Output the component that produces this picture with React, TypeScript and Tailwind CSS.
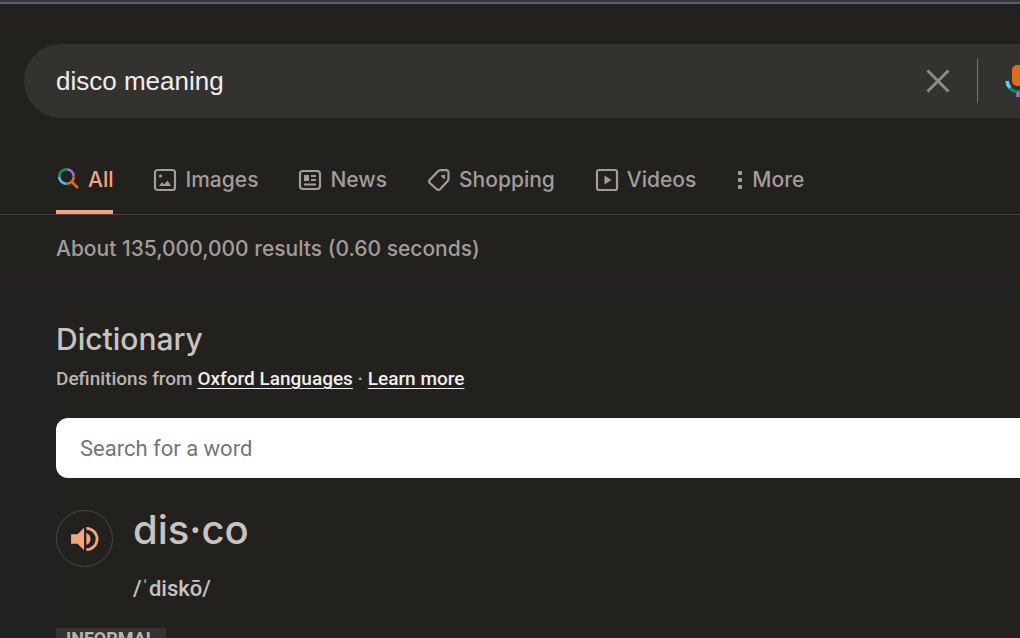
import type { ReactNode } from "react";

function Icon({ children }: { children: ReactNode }) {
  return (
    <svg viewBox="0 0 24 24" className="size-6 shrink-0" fill="none" stroke="currentColor" strokeWidth="2.2" aria-hidden="true">
      {children}
    </svg>
  );
}

function SearchIcon() {
  return (
    <svg viewBox="0 0 24 24" className="size-6 shrink-0" fill="none" strokeWidth="2.6" aria-hidden="true">
      <path d="M10.5 3.2A7.3 7.3 0 0 1 17.8 10.5" stroke="#a06be0" />
      <path d="M3.2 10.5A7.3 7.3 0 0 1 10.5 3.2" stroke="#12965f" />
      <path d="M10.5 17.8A7.3 7.3 0 0 1 3.2 10.5" stroke="#4cc3f5" />
      <path d="M17.8 10.5A7.3 7.3 0 0 1 10.5 17.8" stroke="#e06a1c" />
      <path d="M15.600 15.600L22 22" stroke="#e06a1c" />
    </svg>
  );
}

function MicIcon() {
  return (
    <svg viewBox="0 0 32 36" className="h-9 w-8" fill="none" aria-hidden="true">
      <rect x="10" y="2" width="12" height="21" rx="5" fill="#e06a15" />
      <path d="M5 18C5.3 21 6.4 23.2 8.2 25" stroke="#5fd0fa" strokeWidth="3.5" />
      <path d="M8 25C12 30 20 30 24 25" stroke="#12885c" strokeWidth="3.5" />
      <path d="M24 25C25.6 23.2 26.7 21 27 18" stroke="#5fd0fa" strokeWidth="3.5" />
      <path d="M16 29V34" stroke="#b264d8" strokeWidth="3.5" />
    </svg>
  );
}

const tabs = [
  {
    label: "Images",
    icon: (
      <Icon>
        <rect x="2" y="2" width="20" height="20" rx="2.5" />
        <path d="M6 18L9 14L11 16.5L14.5 12.5L18 18Z" fill="currentColor" stroke="none" />
        <circle cx="7.5" cy="8" r="1.6" fill="currentColor" stroke="none" />
      </Icon>
    ),
  },
  {
    label: "News",
    icon: (
      <Icon>
        <rect x="2" y="3" width="20" height="18" rx="3" />
        <rect x="6" y="7" width="5" height="6" fill="currentColor" stroke="none" />
        <path d="M13 8H18M13 12H18M6 16.5H18" />
      </Icon>
    ),
  },
  {
    label: "Shopping",
    icon: (
      <Icon>
        <path d="M13.5 2.2H19.5A2 2 0 0 1 21.5 4.2V10.5Q21.5 12 20.5 13.2L13 21.3Q11.5 22.8 10 21.3L2.7 15Q1.3 13.6 2.7 12.1L10.8 3.4Q11.9 2.2 13.5 2.2Z" strokeLinejoin="round" />
        <path d="M14 7H18V11Q14.5 10.5 14 7Z" fill="currentColor" stroke="none" />
      </Icon>
    ),
  },
  {
    label: "Videos",
    icon: (
      <Icon>
        <rect x="2" y="2" width="20" height="20" rx="2" />
        <path d="M9.5 7.5L16.5 12L9.5 16.5Z" fill="currentColor" stroke="none" />
      </Icon>
    ),
  },
];

export default function App() {
  return (
    <div className="flex h-screen flex-col overflow-hidden bg-[#22211d] font-['Roboto',sans-serif] text-[#c8c2c2]">
      <div className="h-1 shrink-0 border-b-2 border-[#5d5b63] bg-[#37363c]" />
      <div className="h-2 shrink-0 bg-[#1f2023]" />

      <header className="shrink-0 border-b border-[#44423f]">
        <form role="search" className="mt-8 -mr-10 ml-6 flex h-[74px] items-center rounded-l-full bg-[#33322f] pl-8" onSubmit={(e) => e.preventDefault()}>
          <input
            type="text"
            aria-label="Search"
            defaultValue="disco meaning"
            className="min-w-0 flex-1 bg-transparent font-['Liberation_Sans',sans-serif] text-[26px] text-[#f1eded] outline-none"
          />
          <button type="button" aria-label="Clear" className="mr-5 p-1 text-[#8f8987]">
            <svg viewBox="0 0 30 30" className="size-[30px]" fill="none" stroke="currentColor" strokeWidth="3" aria-hidden="true">
              <path d="M4.5 4.5L25.5 25.5M25.5 4.5L4.5 25.5" />
            </svg>
          </button>
          <div className="h-11 w-px bg-[#77726f]" />
          <button type="button" aria-label="Search by voice" className="mr-[26px] ml-6">
            <MicIcon />
          </button>
        </form>

        <nav className="mt-10 ml-14 flex h-14 gap-10 font-['Inter',sans-serif] text-[21px] font-medium text-[#a39c9a]">
          <a href="#all" aria-current="page" className="flex gap-2 border-b-4 border-[#f4a482] pt-2 leading-7 text-[#f4a482]">
            <SearchIcon />
            All
          </a>
          {tabs.map((tab) => (
            <a key={tab.label} href={"#" + tab.label.toLowerCase()} className="flex gap-2 pt-2 leading-7">
              <span className="pt-0.5">{tab.icon}</span>
              {tab.label}
            </a>
          ))}
          <button type="button" className="flex gap-2 pt-2 leading-7">
            <svg viewBox="0 0 8 24" className="mt-0.5 h-6 w-2" fill="currentColor" aria-hidden="true">
              <rect x="2" y="3" width="4" height="4" rx="1" />
              <rect x="2" y="10" width="4" height="4" rx="1" />
              <rect x="2" y="17" width="4" height="4" rx="1" />
            </svg>
            More
          </button>
        </nav>
      </header>

      <p className="shrink-0 py-5 pl-14 font-['Inter',sans-serif] text-[21px] leading-7 font-medium text-[#a39c9a]">
        About 135,000,000 results (0.60 seconds)
      </p>

      <main className="min-h-0 flex-1 bg-[#202122] pt-3 pl-14">
        <section className="h-full bg-[#22211d] pt-6">
          <h1 className="font-['Inter',sans-serif] text-[30px] leading-10 font-medium">Dictionary</h1>
          <p className="mt-2 text-[19px] leading-6 font-medium text-[#bab4b3]">
            Definitions from{" "}
            <a href="#oxford" className="text-[#f1eded] underline decoration-1 underline-offset-[3px]">Oxford Languages</a>
            {" · "}
            <a href="#learn" className="text-[#f1eded] underline decoration-1 underline-offset-[3px]">Learn more</a>
          </p>

          <input
            type="text"
            aria-label="Search for a word"
            placeholder="Search for a word"
            className="mt-[27px] block h-[60px] w-full rounded-l-xl bg-white px-6 text-[22px] text-[#222222] outline-none placeholder:text-[#767676]"
          />

          <div className="mt-8 flex gap-5">
            <button type="button" aria-label="Play pronunciation" className="flex size-[57px] shrink-0 items-center justify-center rounded-full border border-[#4b4744] text-[#f4a482]">
              <svg viewBox="0 0 30 28" className="h-[26px] w-7" fill="currentColor" aria-hidden="true">
                <path d="M0 9H7L14 2V26L7 19H0Z" />
                <path d="M16.5 7.5A7 7 0 0 1 16.5 20.5Z" />
                <path d="M16.5 2.5A11.5 11.5 0 0 1 16.5 25.5" fill="none" stroke="currentColor" strokeWidth="3" />
              </svg>
            </button>
            <div>
              <h2 className="font-['Inter',sans-serif] text-[40px] leading-10 font-medium">dis·co</h2>
              <p className="mt-[25px] text-[22px] leading-7 font-medium">/ˈdiskō/</p>
            </div>
          </div>

          <span className="mt-[25px] inline-block bg-[#353331] px-2.5 text-[18px] leading-[22px] font-bold text-[#bab4b3]">INFORMAL</span>
        </section>
      </main>
    </div>
  );
}
